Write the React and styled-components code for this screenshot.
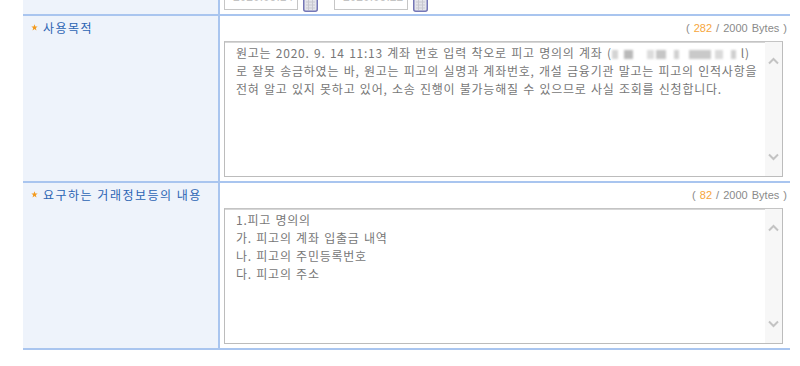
import React from 'react';
import styled, {createGlobalStyle} from 'styled-components';

const Global = createGlobalStyle`
  html, body {
    margin: 0;
    padding: 0;
    background: #fff;
  }
  body {
    font-family: "Noto Sans CJK KR", "Noto Sans", sans-serif;
  }
`;

const Table = styled.div`
  margin-left: 23px;
  width: 767px;
`;

const Row = styled.div`
  display: flex;
  height: ${(props) => props.height}px;
  border-bottom: 2px solid #a9c5ef;
  overflow: hidden;
`;

const Label = styled.div`
  flex: 0 0 197px;
  background: #eef3fb;
  border-right: 2px solid #a9c5ef;
  padding: 4px 0 0 8px;
  box-sizing: border-box;
  display: flex;
  align-items: flex-start;
  gap: 5px;
  height: 100%;
`;

const LabelText = styled.span`
  font-size: 12px;
  line-height: 16px;
  color: #2b64b3;
  letter-spacing: 1.5px;
`;

const Star = styled.svg`
  width: 7px;
  height: 7px;
  margin-top: 4px;
  flex: none;
`;

const Cell = styled.div`
  flex: 1;
  display: flex;
  flex-direction: column;
  padding: 4px 7px 4px 4px;
  box-sizing: border-box;
  gap: 5px;
`;

const DateCell = styled.div`
  flex: 1;
  display: flex;
  align-items: flex-end;
  padding: 0 0 4px 4px;
  gap: 5px;
`;

const DateInput = styled.div`
  width: 74px;
  height: 20px;
  box-sizing: border-box;
  border: 1px solid #c6c6c6;
  font-family: "Liberation Sans", Arial, sans-serif;
  font-size: 12px;
  line-height: 12px;
  color: #c4c4c4;
  padding-left: 8px;
  overflow: hidden;
  margin-left: ${(props) => props.gapLeft || 0}px;
`;

const CalIcon = styled.svg`
  width: 15px;
  height: 15px;
  margin-bottom: -2px;
`;

const Bytes = styled.div`
  text-align: right;
  font-family: "Liberation Sans", Arial, sans-serif;
  font-size: 11px;
  line-height: 16px;
  color: #8a8a8a;
  margin-right: -4px;
  word-spacing: 1px;
`;

const Count = styled.span`
  color: #f6a63c;
`;

const Box = styled.div`
  height: 136px;
  box-sizing: border-box;
  border: 1px solid #bcbcbc;
  border-top-color: #c4c4c4;
  box-shadow: inset 0 1px 0 #d6d6d6;
  display: flex;
  background: #fff;
`;

const BoxText = styled.div`
  flex: 1;
  padding: 2px 0 0 11px;
  font-size: 12px;
  line-height: 18px;
  color: #777;
  white-space: nowrap;
  letter-spacing: 0.75px;
  word-spacing: 1px;
  overflow: hidden;
`;

const Scroll = styled.div`
  flex: 0 0 17px;
  background: #f7f7f7;
  display: flex;
  flex-direction: column;
  justify-content: space-between;
  align-items: center;
  padding: 15px 0 15px;
`;

const Chevron = styled.svg`
  width: 11px;
  height: 8px;
`;

const Blur = styled.span`
  display: inline-block;
  width: ${(props) => props.w}px;
  height: ${(props) => props.h || 9}px;
  background: ${(props) => props.c};
  filter: blur(0.8px);
  vertical-align: middle;
  margin-right: ${(props) => props.m || 0}px;
`;

const StarIcon = () => (
  <Star viewBox="0 0 10 10">
    <path d="M5 0.5 L6.2 3.6 L9.5 3.7 L6.9 5.8 L7.8 9.2 L5 7.3 L2.2 9.2 L3.1 5.8 L0.5 3.7 L3.8 3.6 Z" fill="#f39a1e" />
  </Star>
);

const Calendar = () => (
  <CalIcon viewBox="0 0 15 15">
    <rect x="0.75" y="0.75" width="13.5" height="13.5" rx="2" fill="#e4e4ea" stroke="#7476b6" strokeWidth="1.5" />
    <path d="M3 5h9M3 8h9M3 11h9M5.5 3v10M9.5 3v10" stroke="#c8c8d0" strokeWidth="1" />
  </CalIcon>
);

const ScrollBar = () => (
  <Scroll>
    <Chevron viewBox="0 0 11 8">
      <path d="M1 6.5 L5.5 2 L10 6.5" fill="none" stroke="#c3c3c3" strokeWidth="2" />
    </Chevron>
    <Chevron viewBox="0 0 11 8">
      <path d="M1 1.5 L5.5 6 L10 1.5" fill="none" stroke="#c3c3c3" strokeWidth="2" />
    </Chevron>
  </Scroll>
);

const Field = ({count, children}) => (
  <Cell>
    <Bytes>( <Count>{count}</Count> / 2000 Bytes )</Bytes>
    <Box>
      <BoxText>{children}</BoxText>
      <ScrollBar />
    </Box>
  </Cell>
);

export default function App() {
  return (
    <>
      <Global />
      <Table>
        <Row height={14}>
          <Label />
          <DateCell>
            <DateInput>2020.09.14</DateInput>
            <Calendar />
            <DateInput gapLeft={11}>2020.09.22</DateInput>
            <Calendar />
          </DateCell>
        </Row>
        <Row height={165}>
          <Label>
            <StarIcon />
            <LabelText>사용목적</LabelText>
          </Label>
          <Field count={282}>
            <div>
              원고는 2020. 9. 14 11:13 계좌 번호 입력 착오로 피고 명의의 계좌 (
              <Blur w={6} c="#d4d4d4" m={6} />
              <Blur w={9} c="#b9b9b9" m={14} />
              <Blur w={7} c="#dcdcdc" m={2} />
              <Blur w={10} c="#c6c6c6" m={8} />
              <Blur w={5} c="#d0d0d0" m={10} />
              <Blur w={22} c="#c9c9c9" m={4} />
              <Blur w={8} c="#dadada" m={8} />
              <Blur w={5} c="#cfcfcf" m={5} />
              l)
            </div>
            <div>로 잘못 송금하였는 바, 원고는 피고의 실명과 계좌번호, 개설 금융기관 말고는 피고의 인적사항을</div>
            <div>전혀 알고 있지 못하고 있어, 소송 진행이 불가능해질 수 있으므로 사실 조회를 신청합니다.</div>
          </Field>
        </Row>
        <Row height={165}>
          <Label>
            <StarIcon />
            <LabelText>요구하는 거래정보등의 내용</LabelText>
          </Label>
          <Field count={82}>
            <div>1.피고 명의의</div>
            <div>가. 피고의 계좌 입출금 내역</div>
            <div>나. 피고의 주민등록번호</div>
            <div>다. 피고의 주소</div>
          </Field>
        </Row>
      </Table>
    </>
  );
}
